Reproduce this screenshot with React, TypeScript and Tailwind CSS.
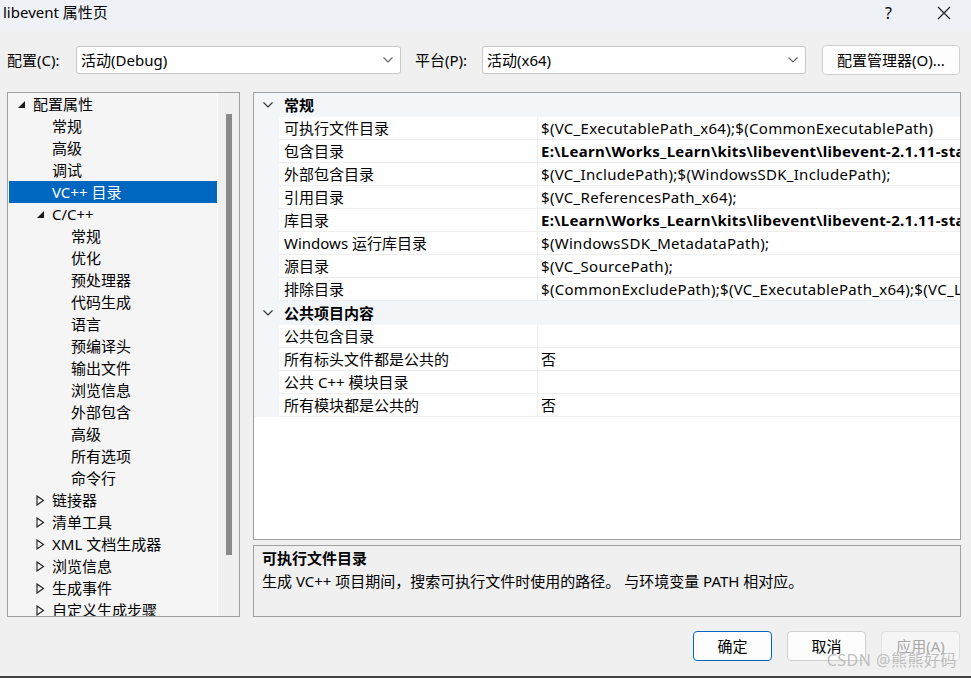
import React from "react";

const FONT = '"Noto Sans", "Noto Sans CJK SC", sans-serif';

type TreeItem = { label: string; level: number; tri?: "open" | "closed"; selected?: boolean };

const tree: TreeItem[] = [
  { label: "配置属性", level: 0, tri: "open" },
  { label: "常规", level: 1 },
  { label: "高级", level: 1 },
  { label: "调试", level: 1 },
  { label: "VC++ 目录", level: 1, selected: true },
  { label: "C/C++", level: 1, tri: "open" },
  { label: "常规", level: 2 },
  { label: "优化", level: 2 },
  { label: "预处理器", level: 2 },
  { label: "代码生成", level: 2 },
  { label: "语言", level: 2 },
  { label: "预编译头", level: 2 },
  { label: "输出文件", level: 2 },
  { label: "浏览信息", level: 2 },
  { label: "外部包含", level: 2 },
  { label: "高级", level: 2 },
  { label: "所有选项", level: 2 },
  { label: "命令行", level: 2 },
  { label: "链接器", level: 1, tri: "closed" },
  { label: "清单工具", level: 1, tri: "closed" },
  { label: "XML 文档生成器", level: 1, tri: "closed" },
  { label: "浏览信息", level: 1, tri: "closed" },
  { label: "生成事件", level: 1, tri: "closed" },
  { label: "自定义生成步骤", level: 1, tri: "closed" },
];

type Row = { cat: string } | { name: string; value: string; bold?: boolean };

const rows: Row[] = [
  { cat: "常规" },
  { name: "可执行文件目录", value: "$(VC_ExecutablePath_x64);$(CommonExecutablePath)" },
  { name: "包含目录", value: "E:\\Learn\\Works_Learn\\kits\\libevent\\libevent-2.1.11-stable\\include;$(IncludePath)", bold: true },
  { name: "外部包含目录", value: "$(VC_IncludePath);$(WindowsSDK_IncludePath);" },
  { name: "引用目录", value: "$(VC_ReferencesPath_x64);" },
  { name: "库目录", value: "E:\\Learn\\Works_Learn\\kits\\libevent\\libevent-2.1.11-stable\\lib;$(LibraryPath)", bold: true },
  { name: "Windows 运行库目录", value: "$(WindowsSDK_MetadataPath);" },
  { name: "源目录", value: "$(VC_SourcePath);" },
  { name: "排除目录", value: "$(CommonExcludePath);$(VC_ExecutablePath_x64);$(VC_LibraryPath_x64)" },
  { cat: "公共项目内容" },
  { name: "公共包含目录", value: "" },
  { name: "所有标头文件都是公共的", value: "否" },
  { name: "公共 C++ 模块目录", value: "" },
  { name: "所有模块都是公共的", value: "否" },
];

function Chevron({ color = "#333" }: { color?: string }) {
  return (
    <svg width="12" height="8" viewBox="0 0 12 8">
      <path d="M1.5 1.5 L6 6 L10.5 1.5" fill="none" stroke={color} strokeWidth="1.2" />
    </svg>
  );
}

function Tri({ kind }: { kind: "open" | "closed" }) {
  if (kind === "open")
    return (
      <svg width="9" height="9" viewBox="0 0 9 9">
        <path d="M8 1 L8 8 L1 8 Z" fill="#1a1a1a" />
      </svg>
    );
  return (
    <svg width="9" height="11" viewBox="0 0 9 11">
      <path d="M1 1 L7.5 5.5 L1 10 Z" fill="none" stroke="#1a1a1a" strokeWidth="1.1" />
    </svg>
  );
}

function Combo({ text, w }: { text: string; w: string }) {
  return (
    <div className={`${w} h-[28px] bg-white border border-[#c8c8c8] rounded-[3px] flex items-center justify-between pl-[4px] pr-[6px]`}>
      <span>{text}</span>
      <Chevron color="#666" />
    </div>
  );
}

export default function App() {
  return (
    <div
      className="w-[971px] h-[678px] bg-[#f0f0f0] flex flex-col text-[15px] text-black overflow-hidden relative"
      style={{ fontFamily: FONT }}
    >
      {/* title bar */}
      <div className="h-[31px] bg-[#eef2f7] flex items-center justify-between pl-[3px] shrink-0">
        <span className="leading-none -mt-[6px]">libevent 属性页</span>
        <div className="flex items-center h-full">
          <span className="text-[16px] mr-[45px] -mt-[6px]">?</span>
          <svg width="14" height="14" viewBox="0 0 14 14" className="mr-[20px] -mt-[6px]">
            <path d="M1 1 L13 13 M13 1 L1 13" stroke="#222" strokeWidth="1.2" />
          </svg>
        </div>
      </div>

      {/* toolbar */}
      <div className="mt-[14px] h-[30px] flex items-center shrink-0">
        <span className="ml-[7px] w-[69px]">配置(C):</span>
        <Combo text="活动(Debug)" w="w-[325px]" />
        <span className="ml-[14px] w-[67px]">平台(P):</span>
        <Combo text="活动(x64)" w="w-[324px]" />
        <div className="ml-[16px] w-[138px] h-[30px] bg-[#fdfdfd] border border-[#d0d0d0] rounded-[4px] flex items-center justify-center">
          配置管理器(O)...
        </div>
      </div>

      {/* main */}
      <div className="mt-[17px] h-[525px] flex px-[7px] gap-[13px] shrink-0">
        {/* tree */}
        <div className="w-[233px] h-full border border-[#a0a0a0] bg-[#f5f5f5] flex overflow-hidden">
          <div className="flex-1 flex flex-col overflow-hidden">
            {tree.map((t, i) => (
              <div
                key={i}
                className={`h-[22px] shrink-0 flex items-center ml-[1px] ${t.selected ? "bg-[#0067c0] text-white" : ""}`}
              >
                <div className="flex items-center" style={{ paddingLeft: 8 + t.level * 19 }}>
                  <div className="w-[16px] flex items-center justify-start">{t.tri ? <Tri kind={t.tri} /> : null}</div>
                  <span>{t.label}</span>
                </div>
              </div>
            ))}
          </div>
          <div className="w-[22px] h-full border-l border-white bg-[#f0f0f0] flex justify-center pt-[21px]">
            <div className="w-[6px] h-[441px] bg-[#8a8a8a]" />
          </div>
        </div>

        {/* right */}
        <div className="w-[708px] h-full flex flex-col gap-[5px]">
          <div className="h-[448px] border border-[#a0a0a0] bg-white flex flex-col overflow-hidden">
            {rows.map((r, i) =>
              "cat" in r ? (
                <div key={i} className="h-[24px] shrink-0 bg-[#f3f6f9] flex items-center">
                  <div className="w-[25px] flex justify-center pl-[2px]">
                    <Chevron />
                  </div>
                  <span className="font-bold ml-[5px]">{r.cat}</span>
                </div>
              ) : (
                <div key={i} className="h-[23px] shrink-0 flex">
                  <div className="w-[25px] bg-[#f3f6f9]" />
                  <div className="w-[258px] border-b border-[#eeeeee] flex items-center pl-[5px] whitespace-nowrap overflow-hidden">
                    {r.name}
                  </div>
                  <div className="flex-1 border-b border-l border-[#eeeeee] flex items-center pl-[3px] whitespace-nowrap overflow-hidden tracking-[0.3px]">
                    <span className={r.bold ? "font-bold" : ""}>{r.value}</span>
                  </div>
                </div>
              )
            )}
          </div>
          <div className="flex-1 border border-[#a0a0a0] bg-[#f0f0f0] pl-[8px] pt-[1px] flex flex-col">
            <div className="font-bold h-[23px] flex items-center">可执行文件目录</div>
            <div className="h-[23px] flex items-center">生成 VC++ 项目期间，搜索可执行文件时使用的路径。 与环境变量 PATH 相对应。</div>
          </div>
        </div>
      </div>

      {/* buttons */}
      <div className="mt-[14px] h-[30px] flex justify-end gap-[15px] pr-[11px] shrink-0">
        <div className="w-[79px] h-[30px] bg-[#fdfdfd] border border-[#0067c0] rounded-[4px] flex items-center justify-center">
          确定
        </div>
        <div className="w-[79px] h-[30px] bg-[#fdfdfd] border border-[#d0d0d0] rounded-[4px] flex items-center justify-center">
          取消
        </div>
        <div className="w-[79px] h-[30px] bg-[#f5f5f5] border border-[#e0e0e0] rounded-[4px] flex items-center justify-center text-[#a8a8a8]">
          应用(A)
        </div>
      </div>

      <div className="absolute right-[14px] bottom-[6px] text-[16px] text-[#b0b0b0]/80 tracking-[0.5px]">CSDN @熊熊好码</div>
      <div className="absolute left-0 right-0 bottom-0 h-[2px] bg-[#444]" />
    </div>
  );
}
